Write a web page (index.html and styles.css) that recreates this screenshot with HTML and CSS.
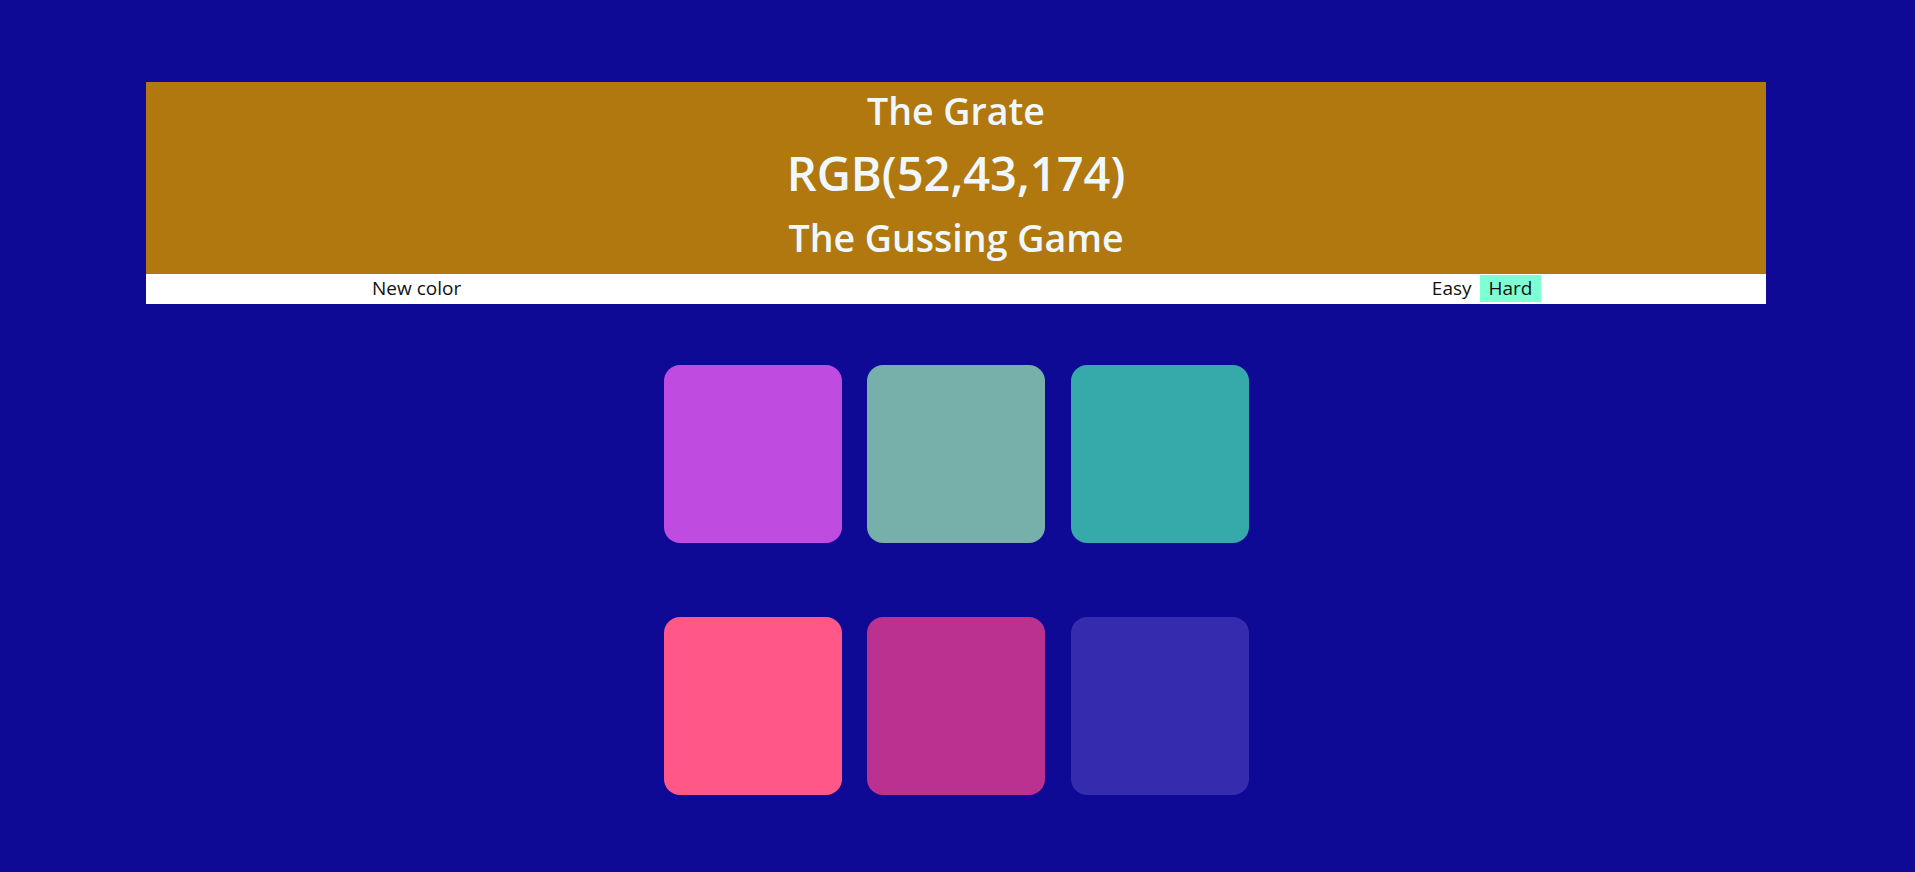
FILE: index.html
```html
<!DOCTYPE html>
<html lang="en">
<head>
<meta charset="utf-8">
<title>The Grate Color Guessing Game</title>
<link rel="stylesheet" href="styles.css">
</head>
<body>
  <header class="banner">
    <h1 class="title">The Grate</h1>
    <div class="target">RGB(52,43,174)</div>
    <h2 class="subtitle">The Gussing Game</h2>
  </header>
  <nav class="stripe">
    <button class="btn">New color</button>
    <div class="modes">
      <button class="btn btn-mode">Easy</button>
      <button class="btn btn-mode btn-active">Hard</button>
    </div>
  </nav>
  <main class="board">
    <div class="square sq-1"></div>
    <div class="square sq-2"></div>
    <div class="square sq-3"></div>
    <div class="square sq-4"></div>
    <div class="square sq-5"></div>
    <div class="square sq-6"></div>
  </main>
</body>
</html>
```

FILE: styles.css
```css
html, body {
  margin: 0;
  padding: 0;
}

body {
  background: #0e0a96;
  font-family: "Open Sans", "Noto Sans", sans-serif;
  padding: 82px 3px 0 0;
}

.banner {
  width: 1620px;
  height: 192px;
  margin: 0 auto;
  background: #b0780e;
  color: #f0f8ff;
  text-align: center;
  box-sizing: border-box;
  padding-top: 2px;
}

.title,
.subtitle {
  margin: 0;
  font-size: 37.5px;
  font-weight: 600;
}

.title {
  line-height: 53px;
}

.subtitle {
  line-height: 56px;
}

.target {
  font-size: 47px;
  font-weight: 600;
  line-height: 73px;
}

.stripe {
  width: 1620px;
  height: 30px;
  margin: 0 auto;
  background: #ffffff;
  box-sizing: border-box;
  padding: 1px 225px 2px 216.5px;
  display: flex;
  justify-content: space-between;
  align-items: stretch;
}

.modes {
  display: flex;
}

.btn {
  border: none;
  background: transparent;
  font-family: inherit;
  font-size: 19px;
  color: #111111;
  padding: 0 9.5px;
  margin: 0;
  line-height: 27px;
  cursor: pointer;
}

.btn-mode {
  padding: 0 8.5px;
}

.btn-active {
  background: #7fffd4;
}

.board {
  width: 585px;
  margin: 61px auto 0;
  display: grid;
  grid-template-columns: repeat(3, 178px);
  grid-auto-rows: 178px;
  column-gap: 25.5px;
  row-gap: 74px;
}

.square {
  border-radius: 16px;
}

.sq-1 { background: #c04be0; }
.sq-2 { background: #77b0aa; }
.sq-3 { background: #36a9aa; }
.sq-4 { background: #ff5788; }
.sq-5 { background: #bb3190; }
.sq-6 { background: #342bae; }
```
